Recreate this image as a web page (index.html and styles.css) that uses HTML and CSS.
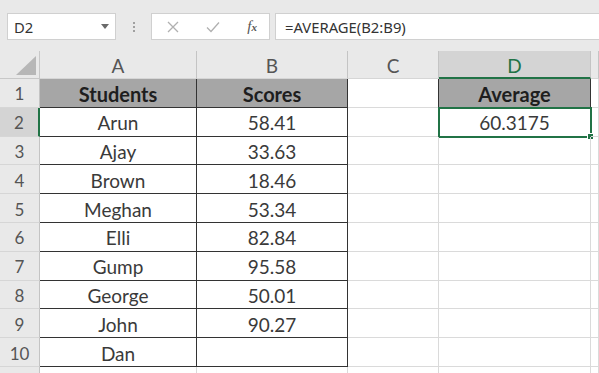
FILE: index.html
```html
<!DOCTYPE html>
<html lang="en">
<head>
    <meta charset="UTF-8">
    <title>AVERAGE</title>
    <link rel="stylesheet" href="styles.css">
</head>
<body>
    <div class="toolbar">
        <div class="name-box">
            <span>D2</span>
            <svg class="arrow" width="8" height="5" viewBox="0 0 8 5"><path d="M0 0h8L4 5z" fill="#6a6a6a"/></svg>
        </div>
        <div class="grip"><i></i><i></i><i></i></div>
        <div class="fx-buttons">
            <svg width="12" height="12" viewBox="0 0 12 12"><path d="M1 1L11 11M11 1L1 11" stroke="#b0b0b0" stroke-width="1.3"/></svg>
            <svg width="14" height="12" viewBox="0 0 14 12"><path d="M1 6.5L5 10.5L13 1.5" stroke="#b0b0b0" stroke-width="1.3" fill="none"/></svg>
            <span class="fx">f<small>x</small></span>
        </div>
        <div class="formula">=AVERAGE(B2:B9)</div>
    </div>

    <div class="sheet">
        <!-- column headers -->
        <div class="corner"><svg width="20" height="19" viewBox="0 0 20 19"><path d="M20 0V19H0z" fill="#b7b7b7"/></svg></div>
        <div class="col-head">A</div>
        <div class="col-head">B</div>
        <div class="col-head">C</div>
        <div class="col-head active">D</div>
        <div class="col-head"></div>

        <div class="row-head">1</div>
        <div class="cell th dark">Students</div>
        <div class="cell th dark">Scores</div>
        <div class="cell dark-r"></div>
        <div class="cell th dark">Average</div>
        <div class="cell"></div>

        <div class="row-head active">2</div>
        <div class="cell dark">Arun</div>
        <div class="cell dark">58.41</div>
        <div class="cell"></div>
        <div class="cell selected">60.3175<span class="handle"></span></div>
        <div class="cell"></div>

        <div class="row-head">3</div>
        <div class="cell dark">Ajay</div>
        <div class="cell dark">33.63</div>
        <div class="cell"></div><div class="cell"></div><div class="cell"></div>

        <div class="row-head">4</div>
        <div class="cell dark">Brown</div>
        <div class="cell dark">18.46</div>
        <div class="cell"></div><div class="cell"></div><div class="cell"></div>

        <div class="row-head">5</div>
        <div class="cell dark">Meghan</div>
        <div class="cell dark">53.34</div>
        <div class="cell"></div><div class="cell"></div><div class="cell"></div>

        <div class="row-head">6</div>
        <div class="cell dark">Elli</div>
        <div class="cell dark">82.84</div>
        <div class="cell"></div><div class="cell"></div><div class="cell"></div>

        <div class="row-head">7</div>
        <div class="cell dark">Gump</div>
        <div class="cell dark">95.58</div>
        <div class="cell"></div><div class="cell"></div><div class="cell"></div>

        <div class="row-head">8</div>
        <div class="cell dark">George</div>
        <div class="cell dark">50.01</div>
        <div class="cell"></div><div class="cell"></div><div class="cell"></div>

        <div class="row-head">9</div>
        <div class="cell dark">John</div>
        <div class="cell dark">90.27</div>
        <div class="cell"></div><div class="cell"></div><div class="cell"></div>

        <div class="row-head">10</div>
        <div class="cell dark">Dan</div>
        <div class="cell dark"></div>
        <div class="cell"></div><div class="cell"></div><div class="cell"></div>

        <div class="row-head"></div>
        <div class="cell"></div><div class="cell"></div><div class="cell"></div><div class="cell"></div><div class="cell"></div>
    </div>
</body>
</html>
```

FILE: styles.css
```css
body {
    margin: 0;
    width: 599px;
    height: 373px;
    overflow: hidden;
    background-color: white;
    font-family: 'Lato', 'Liberation Sans', sans-serif;
}
.toolbar {
    height: 51px;
    box-sizing: border-box;
    padding: 13px 0 0 7px;
    background-color: #e9e9e9;
    display: flex;
    align-items: flex-start;
    font-family: 'Noto Sans', 'Liberation Sans', sans-serif;
    font-size: 14.8px;
    color: #333;
}
.name-box {
    width: 109px;
    height: 27px;
    box-sizing: border-box;
    background-color: white;
    border: 1px solid #d0d0d0;
    display: flex;
    align-items: center;
    justify-content: space-between;
    padding: 0 6px 0 6px;
}
.grip {
    width: 35px;
    height: 27px;
    display: flex;
    flex-direction: column;
    align-items: center;
    justify-content: center;
    gap: 2px;
}
.grip i {
    width: 2px;
    height: 2px;
    background-color: #a0a0a0;
}
.fx-buttons {
    width: 119px;
    height: 27px;
    box-sizing: border-box;
    background-color: white;
    border: 1px solid #d0d0d0;
    display: flex;
    align-items: center;
    justify-content: space-between;
    padding: 0 12px 0 15px;
}
.fx {
    font-family: 'Liberation Serif', serif;
    font-style: italic;
    font-size: 15px;
    color: #555;
}
.fx small {
    font-size: 11px;
    font-weight: bold;
}
.formula {
    flex: 1;
    height: 27px;
    margin-left: 5px;
    box-sizing: border-box;
    background-color: white;
    border: 1px solid #d0d0d0;
    border-right: none;
    padding-left: 9px;
    display: flex;
    align-items: center;
}
.sheet {
    display: grid;
    grid-template-columns: 40px 157px 151px 91px 152px 8px;
    grid-template-rows: 28px repeat(10, 28.8px) 10px;
    font-size: 19px;
    color: #3a3a3a;
}
.corner {
    background-color: #e9e9e9;
    border-right: 1px solid #c8c8c8;
    border-bottom: 1px solid #c8c8c8;
    display: flex;
    align-items: flex-end;
    justify-content: flex-end;
    padding: 0 3px 3px 0;
}
.col-head,
.row-head {
    background-color: #e9e9e9;
    border-right: 1px solid #c4c4c4;
    border-bottom: 1px solid #d6d6d6;
    display: flex;
    align-items: center;
    justify-content: center;
    padding-top: 2px;
    color: #555;
    font-size: 17px;
}
.col-head {
    font-size: 19px;
}
.col-head.active {
    background-color: #d4d4d4;
    color: #217346;
    border-bottom: 2px solid #217346;
}
.row-head.active {
    background-color: #d4d4d4;
    border-right: 2px solid #217346;
}
.cell {
    border-right: 1px solid #dadada;
    border-bottom: 1px solid #dadada;
    display: flex;
    align-items: center;
    justify-content: center;
    padding-top: 2px;
    position: relative;
}
.cell.dark {
    border-right: 1.5px solid #333;
    border-bottom: 1.5px solid #333;
}
.cell.dark-r {
    border-right: 1.5px solid #333;
}
.cell.th {
    background-color: #a6a6a6;
    font-weight: bold;
    font-size: 20px;
    color: #1e1e1e;
}
.cell.selected {
    outline: 2px solid #217346;
    outline-offset: -1px;
    border-right-color: transparent;
}
.handle {
    position: absolute;
    right: -4px;
    bottom: -4px;
    width: 5px;
    height: 5px;
    background-color: #217346;
    border: 1px solid white;
}
```
